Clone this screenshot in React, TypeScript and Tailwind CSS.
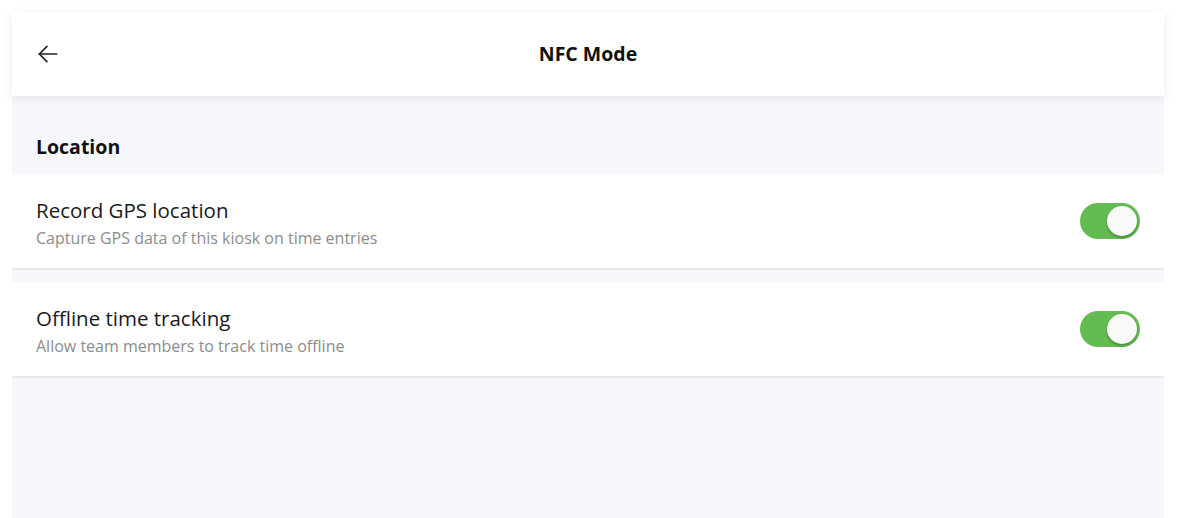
import React, { useState } from 'react';

const Toggle: React.FC<{ on: boolean; onChange: () => void }> = ({ on, onChange }) => (
  <button
    onClick={onChange}
    className={`relative h-[36px] w-[60px] shrink-0 rounded-full transition-colors ${on ? 'bg-[#64bb52]' : 'bg-[#d5d7dc]'}`}
  >
    <span
      className={`absolute top-[3px] h-[30px] w-[30px] rounded-full bg-[#f9f9f9] shadow-[0_2px_3px_rgba(0,0,0,0.25)] transition-all ${on ? 'left-[27px]' : 'left-[3px]'}`}
    />
  </button>
);

const SettingRow: React.FC<{ title: string; desc: string; on: boolean; onChange: () => void }> = ({ title, desc, on, onChange }) => (
  <div className="flex h-[96px] items-center justify-between border-b-2 border-[#e6e7ea] bg-white pl-[24px] pr-[24px]">
    <div className="flex flex-col pt-[4px]">
      <span className="text-[20.5px] leading-[26px] text-[#1a1a1a]">{title}</span>
      <span className="mt-[5px] text-[16px] leading-[21px] text-[#8c8c8c]">{desc}</span>
    </div>
    <Toggle on={on} onChange={onChange} />
  </div>
);

export default function App() {
  const [gps, setGps] = useState(true);
  const [offline, setOffline] = useState(true);

  return (
    <div className="h-[518px] bg-white pl-[12px] pr-[13px] pt-[12px] font-['Open_Sans','Lato',sans-serif]">
      <div className="flex h-full flex-col bg-[#f6f7fb]">
        {/* Header */}
        <div className="relative z-10 flex h-[84px] shrink-0 items-center bg-white shadow-[0_2px_10px_rgba(0,0,0,0.08)]">
          <button className="ml-[22px] flex h-[28px] w-[28px] items-center justify-center text-[#222]">
            <svg width="26" height="26" viewBox="0 0 24 24" fill="none" stroke="currentColor" strokeWidth="1.6" strokeLinecap="round" strokeLinejoin="round">
              <path d="M20 12H4" />
              <path d="M11 5l-7 7 7 7" />
            </svg>
          </button>
          <h1 className="absolute left-1/2 -translate-x-1/2 text-[19.5px] font-bold text-[#111]">NFC Mode</h1>
        </div>

        {/* Section */}
        <div className="px-[24px] pb-[14px] pt-[38px]">
          <h2 className="text-[19.5px] font-bold leading-[26px] text-[#111]">Location</h2>
        </div>

        <SettingRow
          title="Record GPS location"
          desc="Capture GPS data of this kiosk on time entries"
          on={gps}
          onChange={() => setGps(!gps)}
        />
        <div className="h-[12px]" />
        <SettingRow
          title="Offline time tracking"
          desc="Allow team members to track time offline"
          on={offline}
          onChange={() => setOffline(!offline)}
        />
      </div>
    </div>
  );
}
